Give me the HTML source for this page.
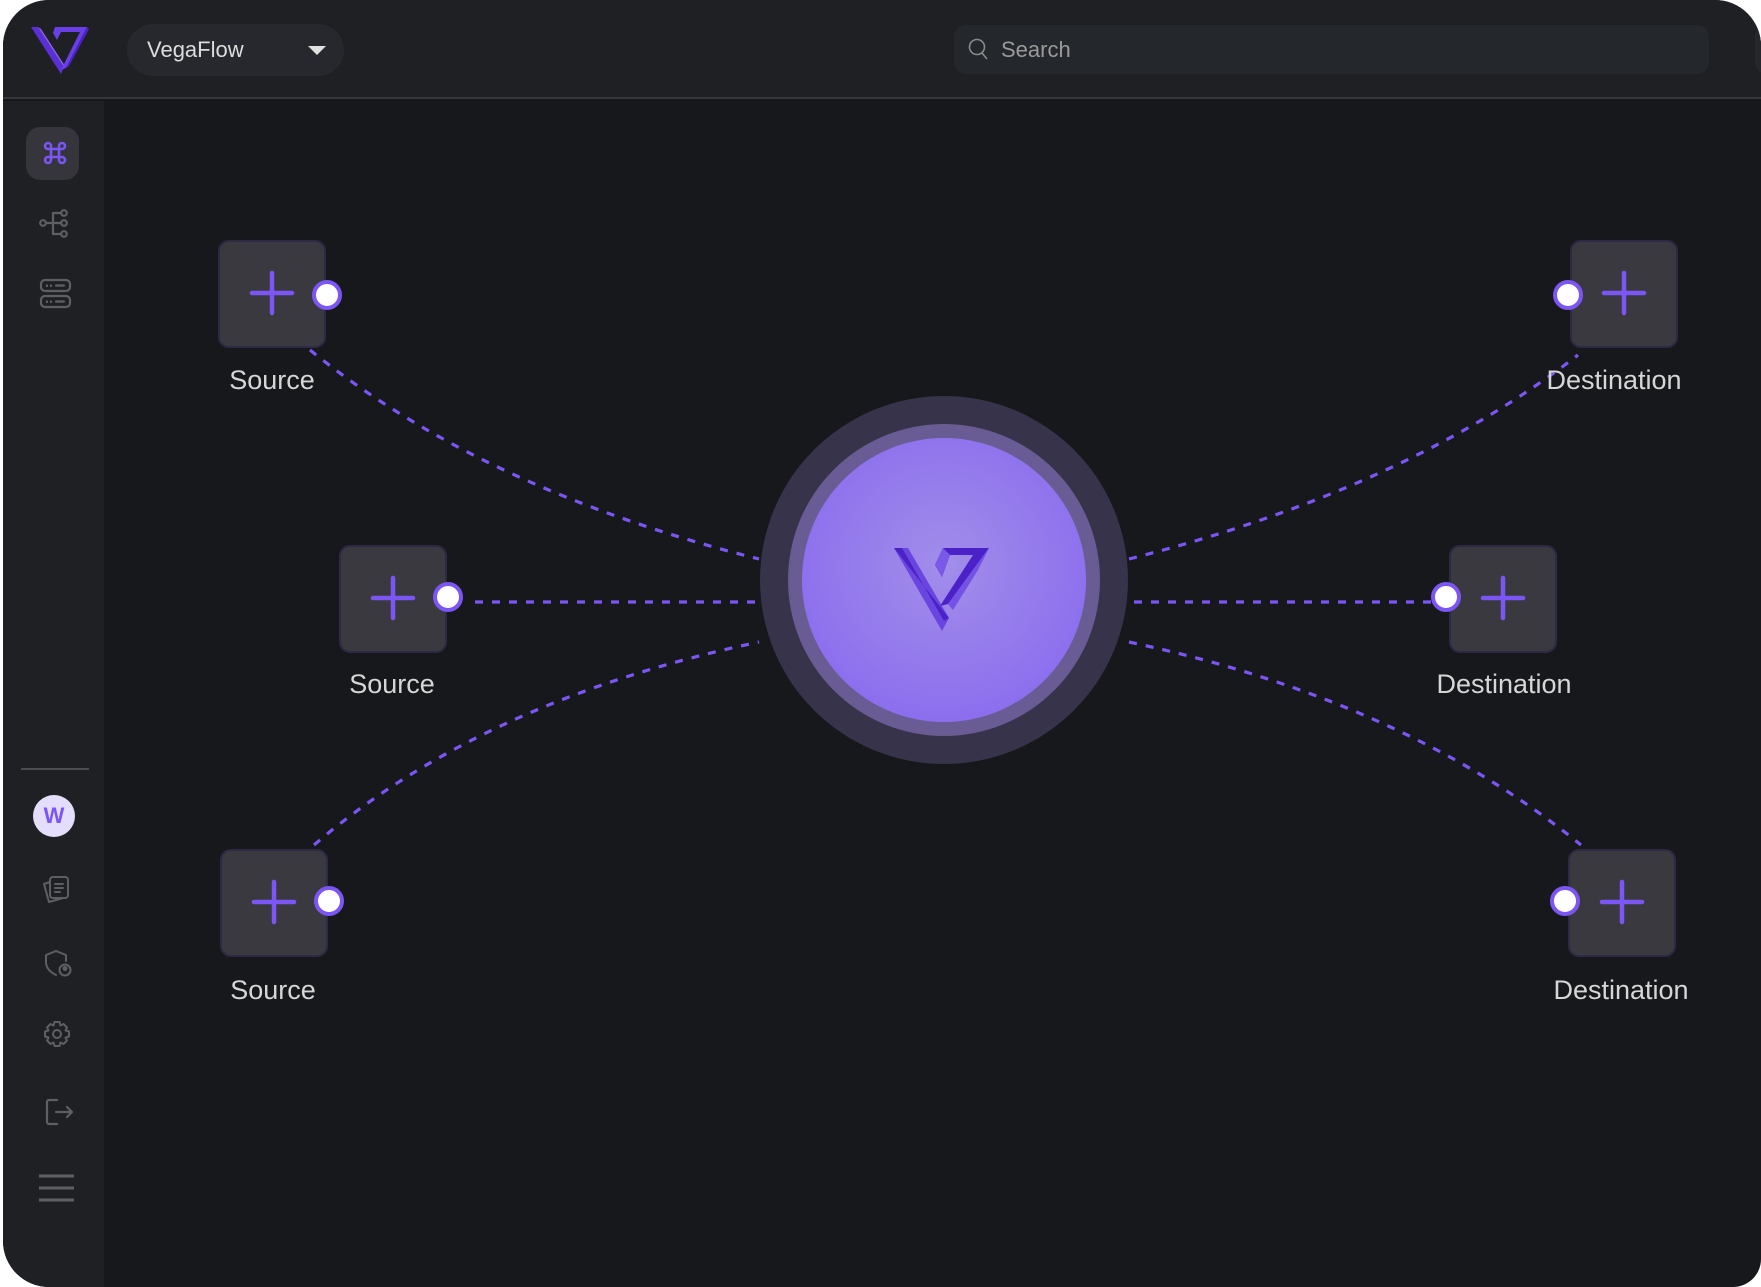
<!DOCTYPE html>
<html><head><meta charset="utf-8"><style>
*{margin:0;padding:0;box-sizing:border-box}
body{width:1761px;height:1287px;background:#fff;overflow:hidden;font-family:"Liberation Sans",sans-serif;position:relative}
.frame{position:absolute;left:3px;top:0;width:1758px;height:1287px;background:#17181c;border-radius:46px 46px 28px 46px;overflow:hidden}
.header{position:absolute;left:0;top:0;right:0;height:99px;background:#1e2024;border-bottom:2px solid #34363b}
.side{position:absolute;left:0;top:101px;width:101px;bottom:0;background:#1e2024}
.pill{position:absolute;left:124px;top:24px;width:217px;height:52px;border-radius:26px;background:#26282d;color:#dcdcdc;font-size:22px;line-height:52px;padding-left:20px}
.caret{position:absolute;right:18px;top:22px;width:0;height:0;border-left:9px solid transparent;border-right:9px solid transparent;border-top:9px solid #e0e0e0}
.search{position:absolute;left:951px;top:25px;width:755px;height:49px;border-radius:12px;background:#24272c;color:#9a9a9a;font-size:22px;line-height:49px;padding-left:47px}
.box{position:absolute;width:108px;height:108px;border-radius:11px;background:#3a393f;border:2px solid #2e2944}
.lbl{position:absolute;color:#d6d6d6;font-size:27px;transform:translateX(-50%);white-space:nowrap}
.act{position:absolute;left:23px;top:127px;width:53px;height:53px;border-radius:14px;background:#35353b}
</style></head><body>
<div class="frame">
<div class="header">
<svg style="position:absolute;left:0;top:0" width="120" height="99"><polygon points="28,27 35,27 61,67 58,74" fill="#5b2fd6"/><polygon points="35,27 38,29 62,66 61,67" fill="#8a62f0"/><polygon points="52,27 84,27 63,68 58,70 77,32 58,32 54,40 50,33" fill="#6a3fe6"/><polygon points="84,27 63,68 66,66 86,29" fill="#4a22c8"/></svg>
<div class="pill">VegaFlow<div class="caret"></div></div>
<div class="search"><svg style="position:absolute;left:14px;top:13px" width="22" height="24" viewBox="0 0 22 24"><circle cx="9" cy="9" r="7.5" fill="none" stroke="#8a8a8a" stroke-width="1.6"/><line x1="14" y1="15" x2="19" y2="21" stroke="#8a8a8a" stroke-width="1.6"/></svg>Search</div>
<div style="position:absolute;left:1752px;top:25px;width:30px;height:49px;border-radius:12px;background:#24272c"></div>
</div>
<div class="side">
<div class="act" style="top:26px"></div>
<div style="position:absolute;left:18px;top:667px;width:68px;height:2px;background:#4a4c51"></div>
<div style="position:absolute;left:30px;top:694px;width:42px;height:42px;border-radius:50%;background:#e4defc;color:#7c55f5;font-weight:bold;font-size:22px;text-align:center;line-height:42px">W</div>
</div>
<svg style="position:absolute;left:0;top:0" width="1758" height="1287" fill="none" stroke-linecap="round" stroke-linejoin="round">
<g stroke="#7c55f5" stroke-width="2.6" transform="translate(41,142)"><path d="M7 7h8v8H7z M7 7H4a3 3 0 1 1 3-3v3 M15 7V4a3 3 0 1 1 3 3h-3 M15 15h3a3 3 0 1 1-3 3v-3 M7 15v3a3 3 0 1 1-3-3h3"/></g>
<g stroke="#5d5f64" stroke-width="2.2" transform="translate(37,210)"><circle cx="3" cy="13" r="2.8"/><circle cx="24" cy="3" r="2.8"/><circle cx="24" cy="13" r="2.8"/><circle cx="24" cy="24" r="2.8"/><path d="M6 13h15 M13 3v21 M13 3h8 M13 24h8"/></g>
<g stroke="#5d5f64" stroke-width="2.2" transform="translate(37,279)"><rect x="1" y="1" width="29" height="11" rx="4"/><rect x="1" y="17" width="29" height="11" rx="4"/><path d="M7 6.5v0.5 M11 6.5v0.5 M16 6.5h8 M7 22.5v0.5 M11 22.5v0.5 M16 22.5h8"/></g>
<g stroke="#5d5f64" stroke-width="2" transform="translate(38,876)"><rect x="9" y="1" width="18" height="21" rx="3"/><path d="M9 6l-6 2 5 18 14-4 M14 8h8 M14 12h8 M14 16h5"/></g>
<g stroke="#5d5f64" stroke-width="2" transform="translate(42,950)"><path d="M11 1l10 4v6 M1 5l10-4 M1 5v7c0 6 4 10 10 13"/><circle cx="20" cy="20" r="5.5"/><circle cx="20" cy="18.5" r="1.5" fill="#5d5f64"/></g>
<g stroke="#5d5f64" stroke-width="2" transform="translate(41,1021)"><circle cx="13" cy="13" r="4"/><path d="M10.5 1h5l1 3.5 3-1.5 3.5 3.5-1.5 3 3.5 1v5l-3.5 1 1.5 3-3.5 3.5-3-1.5-1 3.5h-5l-1-3.5-3 1.5-3.5-3.5 1.5-3L1 15.5v-5l3.5-1-1.5-3L6.5 3l3 1.5z"/></g>
<g stroke="#5d5f64" stroke-width="2.2" transform="translate(43,1099)"><path d="M11 1H3a2 2 0 0 0-2 2v20a2 2 0 0 0 2 2h8 M10 13h16 M21 8l5 5-5 5"/></g>
<g stroke="#5d5f64" stroke-width="3" stroke-linecap="butt"><path d="M36 1176h35 M36 1188h35 M36 1200h35"/></g>
<g stroke="#7c55f5" stroke-width="3.2" stroke-dasharray="8 9" stroke-linecap="butt">
<path d="M307 350 Q480 490 756 559"/>
<path d="M472 602 H756"/>
<path d="M311 845 Q480 700 756 642"/>
<path d="M1126 559 Q1400 490 1575 355"/>
<path d="M1131 602 H1432"/>
<path d="M1126 642 Q1400 700 1578 845"/>
</g>
<defs><radialGradient id="g" cx="50%" cy="45%" r="55%"><stop offset="0" stop-color="#a18ee9"/><stop offset="1" stop-color="#8c6eee"/></radialGradient></defs>
<circle cx="941" cy="580" r="184" fill="#37334a" stroke="none"/>
<circle cx="941" cy="580" r="156" fill="#695c94" stroke="none"/>
<circle cx="941" cy="580" r="142" fill="url(#g)" stroke="none"/>
<g stroke="none"><polygon points="891,548 905,548 946,618 939,631" fill="#6b45e0"/><polygon points="891,548 899,548 941,621 946,618" fill="#4a22c8"/><polygon points="940,548 986,548 945,604 937,606 970,555 947,555 939,577 932,565" fill="#4a22c8"/><polygon points="940,548 947,555 939,577 932,565" fill="#7a58e8"/><polygon points="986,548 945,604 950,610 975,570" fill="#7452e4"/></g>
</svg>
<div class="box" style="left:215px;top:240px"></div>
<div class="box" style="left:336px;top:545px"></div>
<div class="box" style="left:217px;top:849px"></div>
<div class="box" style="left:1567px;top:240px"></div>
<div class="box" style="left:1446px;top:545px"></div>
<div class="box" style="left:1565px;top:849px"></div>
<svg style="position:absolute;left:0;top:0" width="1758" height="1287">
<g stroke="#7c55f5" stroke-width="4.5" stroke-linecap="round">
<path d="M269 273v40 M249 293h40"/><path d="M390 578v40 M370 598h40"/><path d="M271 882v40 M251 902h40"/>
<path d="M1621 273v40 M1601 293h40"/><path d="M1500 578v40 M1480 598h40"/><path d="M1619 882v40 M1599 902h40"/>
</g>
<g fill="#fff" stroke="#7c55f5" stroke-width="4">
<circle cx="324" cy="295" r="13"/><circle cx="445" cy="597" r="13"/><circle cx="326" cy="901" r="13"/>
<circle cx="1565" cy="295" r="13"/><circle cx="1443" cy="597" r="13"/><circle cx="1562" cy="901" r="13"/>
</g></svg>
<div class="lbl" style="left:269px;top:365px">Source</div>
<div class="lbl" style="left:389px;top:669px">Source</div>
<div class="lbl" style="left:270px;top:975px">Source</div>
<div class="lbl" style="left:1611px;top:365px">Destination</div>
<div class="lbl" style="left:1501px;top:669px">Destination</div>
<div class="lbl" style="left:1618px;top:975px">Destination</div>
</div>
</body></html>
